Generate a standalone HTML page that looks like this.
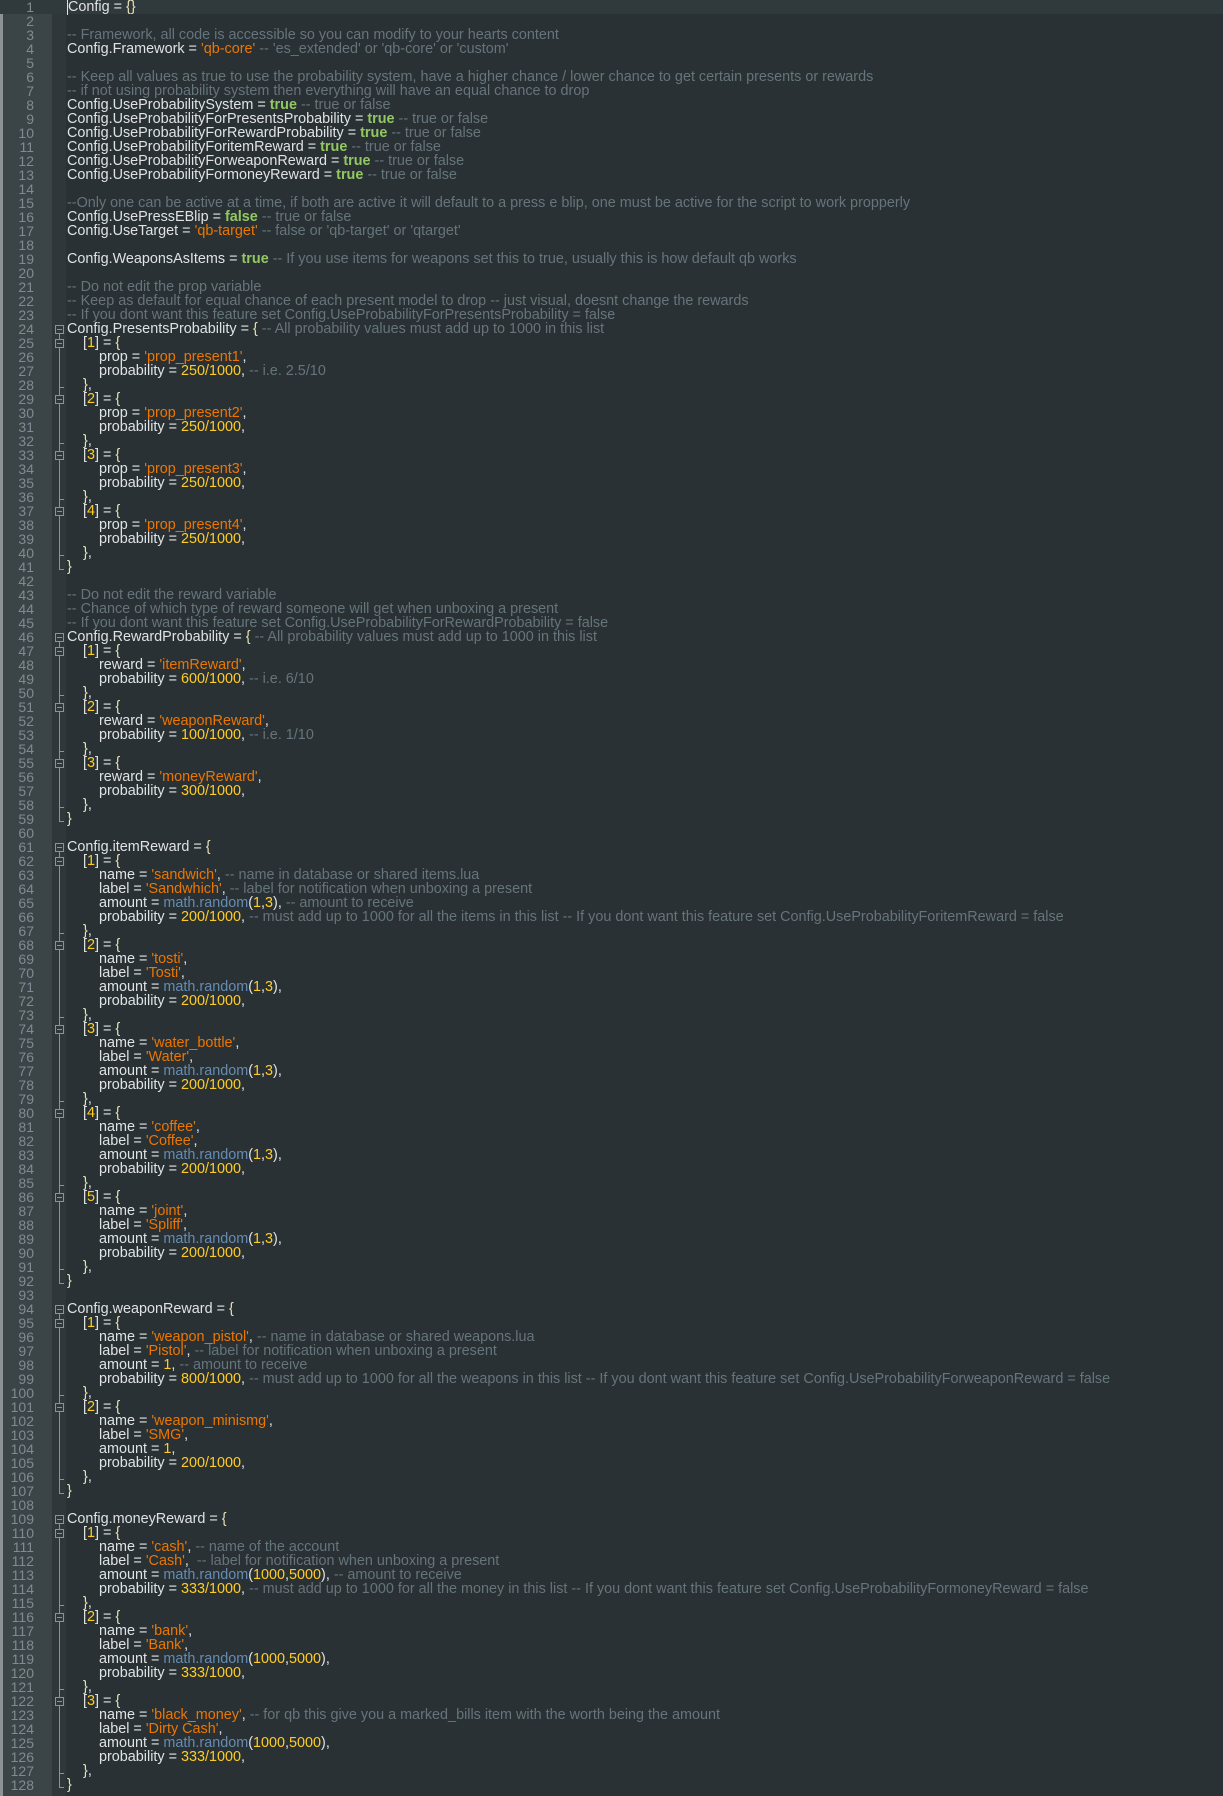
<!DOCTYPE html>
<html><head><meta charset="utf-8"><style>
html,body{margin:0;padding:0;width:1223px;height:1796px;overflow:hidden;background:#293134;}
body{position:relative;font-family:"Liberation Sans",sans-serif;font-size:14.4px;color:#e0e2e4;}
#gut{position:absolute;left:0;top:0;width:52px;height:1796px;background:#3b4447;border-left:3px solid #8c9295;box-sizing:border-box;}
#fold{position:absolute;left:52px;top:0;width:14px;height:1796px;background:#2f373a;}
.l{position:relative;height:14px;line-height:14px;white-space:pre;}
.l.cur{background:#30393c;}
.ln{position:absolute;left:0;width:34px;text-align:right;color:#7d8c93;font-size:14px;}
.fd{position:absolute;left:52px;width:14px;height:14px;}
.fv::before{content:"";position:absolute;left:7px;top:0;height:14px;border-left:1px solid #8a9498;}
.fb::after,.ft::after{content:"";position:absolute;left:3px;top:3px;width:7px;height:7px;border:1px solid #8a9498;background:#2f373a;box-sizing:content-box;}
.fb::before{content:"";position:absolute;left:7px;top:0;height:14px;border-left:1px solid #8a9498;}
.ft::before{content:"";position:absolute;left:7px;top:7px;height:7px;border-left:1px solid #8a9498;}
.fb>i,.ft>i{position:absolute;left:5px;top:7px;width:5px;height:1px;background:#8a9498;z-index:2;}
.fm::before{content:"";position:absolute;left:7px;top:0;height:14px;border-left:1px solid #8a9498;}
.fm::after{content:"";position:absolute;left:7px;top:9px;width:5px;border-top:1px solid #8a9498;}
.fe::before{content:"";position:absolute;left:7px;top:0;height:9px;border-left:1px solid #8a9498;}
.fe::after{content:"";position:absolute;left:7px;top:9px;width:5px;border-top:1px solid #8a9498;}
.cd{position:absolute;left:67px;}
.i1{left:83px;}.i2{left:99px;}
.c{color:#66747b}.s{color:#ec7600}.k{color:#93c763;font-weight:bold}.n{color:#ffcd22}.f{color:#678cb1}.b{color:#e8e2b7}
.caret{border-left:1px solid #e0e2e4;}
</style></head><body>
<div id="gut"></div><div id="fold"></div>
<div class="l cur"><span class="ln">1</span><span class="cd"><span class="caret">C</span>onfig = <span class="b">{}</span></span></div>
<div class="l"><span class="ln">2</span></div>
<div class="l"><span class="ln">3</span><span class="cd c">-- Framework, all code is accessible so you can modify to your hearts content</span></div>
<div class="l"><span class="ln">4</span><span class="cd">Config.Framework = <span class="s">'qb-core'</span> <span class="c">-- 'es_extended' or 'qb-core' or 'custom'</span></span></div>
<div class="l"><span class="ln">5</span></div>
<div class="l"><span class="ln">6</span><span class="cd c">-- Keep all values as true to use the probability system, have a higher chance / lower chance to get certain presents or rewards</span></div>
<div class="l"><span class="ln">7</span><span class="cd c">-- if not using probability system then everything will have an equal chance to drop</span></div>
<div class="l"><span class="ln">8</span><span class="cd">Config.UseProbabilitySystem = <span class="k">true</span> <span class="c">-- true or false</span></span></div>
<div class="l"><span class="ln">9</span><span class="cd">Config.UseProbabilityForPresentsProbability = <span class="k">true</span> <span class="c">-- true or false</span></span></div>
<div class="l"><span class="ln">10</span><span class="cd">Config.UseProbabilityForRewardProbability = <span class="k">true</span> <span class="c">-- true or false</span></span></div>
<div class="l"><span class="ln">11</span><span class="cd">Config.UseProbabilityForitemReward = <span class="k">true</span> <span class="c">-- true or false</span></span></div>
<div class="l"><span class="ln">12</span><span class="cd">Config.UseProbabilityForweaponReward = <span class="k">true</span> <span class="c">-- true or false</span></span></div>
<div class="l"><span class="ln">13</span><span class="cd">Config.UseProbabilityFormoneyReward = <span class="k">true</span> <span class="c">-- true or false</span></span></div>
<div class="l"><span class="ln">14</span></div>
<div class="l"><span class="ln">15</span><span class="cd c">--Only one can be active at a time, if both are active it will default to a press e blip, one must be active for the script to work propperly</span></div>
<div class="l"><span class="ln">16</span><span class="cd">Config.UsePressEBlip = <span class="k">false</span> <span class="c">-- true or false</span></span></div>
<div class="l"><span class="ln">17</span><span class="cd">Config.UseTarget = <span class="s">'qb-target'</span> <span class="c">-- false or 'qb-target' or 'qtarget'</span></span></div>
<div class="l"><span class="ln">18</span></div>
<div class="l"><span class="ln">19</span><span class="cd">Config.WeaponsAsItems = <span class="k">true</span> <span class="c">-- If you use items for weapons set this to true, usually this is how default qb works</span></span></div>
<div class="l"><span class="ln">20</span></div>
<div class="l"><span class="ln">21</span><span class="cd c">-- Do not edit the prop variable</span></div>
<div class="l"><span class="ln">22</span><span class="cd c">-- Keep as default for equal chance of each present model to drop -- just visual, doesnt change the rewards</span></div>
<div class="l"><span class="ln">23</span><span class="cd c">-- If you dont want this feature set Config.UseProbabilityForPresentsProbability = false</span></div>
<div class="l"><span class="ln">24</span><span class="fd ft"><i></i></span><span class="cd">Config.PresentsProbability = <span class="b">{</span> <span class="c">-- All probability values must add up to 1000 in this list</span></span></div>
<div class="l"><span class="ln">25</span><span class="fd fb"><i></i></span><span class="cd i1">[<span class="n">1</span>] = <span class="b">{</span></span></div>
<div class="l"><span class="ln">26</span><span class="fd fv"></span><span class="cd i2">prop = <span class="s">'prop_present1'</span>,</span></div>
<div class="l"><span class="ln">27</span><span class="fd fv"></span><span class="cd i2">probability = <span class="n">250/1000</span>, <span class="c">-- i.e. 2.5/10</span></span></div>
<div class="l"><span class="ln">28</span><span class="fd fm"></span><span class="cd i1"><span class="b">}</span>,</span></div>
<div class="l"><span class="ln">29</span><span class="fd fb"><i></i></span><span class="cd i1">[<span class="n">2</span>] = <span class="b">{</span></span></div>
<div class="l"><span class="ln">30</span><span class="fd fv"></span><span class="cd i2">prop = <span class="s">'prop_present2'</span>,</span></div>
<div class="l"><span class="ln">31</span><span class="fd fv"></span><span class="cd i2">probability = <span class="n">250/1000</span>,</span></div>
<div class="l"><span class="ln">32</span><span class="fd fm"></span><span class="cd i1"><span class="b">}</span>,</span></div>
<div class="l"><span class="ln">33</span><span class="fd fb"><i></i></span><span class="cd i1">[<span class="n">3</span>] = <span class="b">{</span></span></div>
<div class="l"><span class="ln">34</span><span class="fd fv"></span><span class="cd i2">prop = <span class="s">'prop_present3'</span>,</span></div>
<div class="l"><span class="ln">35</span><span class="fd fv"></span><span class="cd i2">probability = <span class="n">250/1000</span>,</span></div>
<div class="l"><span class="ln">36</span><span class="fd fm"></span><span class="cd i1"><span class="b">}</span>,</span></div>
<div class="l"><span class="ln">37</span><span class="fd fb"><i></i></span><span class="cd i1">[<span class="n">4</span>] = <span class="b">{</span></span></div>
<div class="l"><span class="ln">38</span><span class="fd fv"></span><span class="cd i2">prop = <span class="s">'prop_present4'</span>,</span></div>
<div class="l"><span class="ln">39</span><span class="fd fv"></span><span class="cd i2">probability = <span class="n">250/1000</span>,</span></div>
<div class="l"><span class="ln">40</span><span class="fd fm"></span><span class="cd i1"><span class="b">}</span>,</span></div>
<div class="l"><span class="ln">41</span><span class="fd fe"></span><span class="cd"><span class="b">}</span></span></div>
<div class="l"><span class="ln">42</span></div>
<div class="l"><span class="ln">43</span><span class="cd c">-- Do not edit the reward variable</span></div>
<div class="l"><span class="ln">44</span><span class="cd c">-- Chance of which type of reward someone will get when unboxing a present</span></div>
<div class="l"><span class="ln">45</span><span class="cd c">-- If you dont want this feature set Config.UseProbabilityForRewardProbability = false</span></div>
<div class="l"><span class="ln">46</span><span class="fd ft"><i></i></span><span class="cd">Config.RewardProbability = <span class="b">{</span> <span class="c">-- All probability values must add up to 1000 in this list</span></span></div>
<div class="l"><span class="ln">47</span><span class="fd fb"><i></i></span><span class="cd i1">[<span class="n">1</span>] = <span class="b">{</span></span></div>
<div class="l"><span class="ln">48</span><span class="fd fv"></span><span class="cd i2">reward = <span class="s">'itemReward'</span>,</span></div>
<div class="l"><span class="ln">49</span><span class="fd fv"></span><span class="cd i2">probability = <span class="n">600/1000</span>, <span class="c">-- i.e. 6/10</span></span></div>
<div class="l"><span class="ln">50</span><span class="fd fm"></span><span class="cd i1"><span class="b">}</span>,</span></div>
<div class="l"><span class="ln">51</span><span class="fd fb"><i></i></span><span class="cd i1">[<span class="n">2</span>] = <span class="b">{</span></span></div>
<div class="l"><span class="ln">52</span><span class="fd fv"></span><span class="cd i2">reward = <span class="s">'weaponReward'</span>,</span></div>
<div class="l"><span class="ln">53</span><span class="fd fv"></span><span class="cd i2">probability = <span class="n">100/1000</span>, <span class="c">-- i.e. 1/10</span></span></div>
<div class="l"><span class="ln">54</span><span class="fd fm"></span><span class="cd i1"><span class="b">}</span>,</span></div>
<div class="l"><span class="ln">55</span><span class="fd fb"><i></i></span><span class="cd i1">[<span class="n">3</span>] = <span class="b">{</span></span></div>
<div class="l"><span class="ln">56</span><span class="fd fv"></span><span class="cd i2">reward = <span class="s">'moneyReward'</span>,</span></div>
<div class="l"><span class="ln">57</span><span class="fd fv"></span><span class="cd i2">probability = <span class="n">300/1000</span>,</span></div>
<div class="l"><span class="ln">58</span><span class="fd fm"></span><span class="cd i1"><span class="b">}</span>,</span></div>
<div class="l"><span class="ln">59</span><span class="fd fe"></span><span class="cd"><span class="b">}</span></span></div>
<div class="l"><span class="ln">60</span></div>
<div class="l"><span class="ln">61</span><span class="fd ft"><i></i></span><span class="cd">Config.itemReward = <span class="b">{</span></span></div>
<div class="l"><span class="ln">62</span><span class="fd fb"><i></i></span><span class="cd i1">[<span class="n">1</span>] = <span class="b">{</span></span></div>
<div class="l"><span class="ln">63</span><span class="fd fv"></span><span class="cd i2">name = <span class="s">'sandwich'</span>, <span class="c">-- name in database or shared items.lua</span></span></div>
<div class="l"><span class="ln">64</span><span class="fd fv"></span><span class="cd i2">label = <span class="s">'Sandwhich'</span>, <span class="c">-- label for notification when unboxing a present</span></span></div>
<div class="l"><span class="ln">65</span><span class="fd fv"></span><span class="cd i2">amount = <span class="f">math.random</span>(<span class="n">1</span>,<span class="n">3</span>), <span class="c">-- amount to receive</span></span></div>
<div class="l"><span class="ln">66</span><span class="fd fv"></span><span class="cd i2">probability = <span class="n">200/1000</span>, <span class="c">-- must add up to 1000 for all the items in this list -- If you dont want this feature set Config.UseProbabilityForitemReward = false</span></span></div>
<div class="l"><span class="ln">67</span><span class="fd fm"></span><span class="cd i1"><span class="b">}</span>,</span></div>
<div class="l"><span class="ln">68</span><span class="fd fb"><i></i></span><span class="cd i1">[<span class="n">2</span>] = <span class="b">{</span></span></div>
<div class="l"><span class="ln">69</span><span class="fd fv"></span><span class="cd i2">name = <span class="s">'tosti'</span>,</span></div>
<div class="l"><span class="ln">70</span><span class="fd fv"></span><span class="cd i2">label = <span class="s">'Tosti'</span>,</span></div>
<div class="l"><span class="ln">71</span><span class="fd fv"></span><span class="cd i2">amount = <span class="f">math.random</span>(<span class="n">1</span>,<span class="n">3</span>),</span></div>
<div class="l"><span class="ln">72</span><span class="fd fv"></span><span class="cd i2">probability = <span class="n">200/1000</span>,</span></div>
<div class="l"><span class="ln">73</span><span class="fd fm"></span><span class="cd i1"><span class="b">}</span>,</span></div>
<div class="l"><span class="ln">74</span><span class="fd fb"><i></i></span><span class="cd i1">[<span class="n">3</span>] = <span class="b">{</span></span></div>
<div class="l"><span class="ln">75</span><span class="fd fv"></span><span class="cd i2">name = <span class="s">'water_bottle'</span>,</span></div>
<div class="l"><span class="ln">76</span><span class="fd fv"></span><span class="cd i2">label = <span class="s">'Water'</span>,</span></div>
<div class="l"><span class="ln">77</span><span class="fd fv"></span><span class="cd i2">amount = <span class="f">math.random</span>(<span class="n">1</span>,<span class="n">3</span>),</span></div>
<div class="l"><span class="ln">78</span><span class="fd fv"></span><span class="cd i2">probability = <span class="n">200/1000</span>,</span></div>
<div class="l"><span class="ln">79</span><span class="fd fm"></span><span class="cd i1"><span class="b">}</span>,</span></div>
<div class="l"><span class="ln">80</span><span class="fd fb"><i></i></span><span class="cd i1">[<span class="n">4</span>] = <span class="b">{</span></span></div>
<div class="l"><span class="ln">81</span><span class="fd fv"></span><span class="cd i2">name = <span class="s">'coffee'</span>,</span></div>
<div class="l"><span class="ln">82</span><span class="fd fv"></span><span class="cd i2">label = <span class="s">'Coffee'</span>,</span></div>
<div class="l"><span class="ln">83</span><span class="fd fv"></span><span class="cd i2">amount = <span class="f">math.random</span>(<span class="n">1</span>,<span class="n">3</span>),</span></div>
<div class="l"><span class="ln">84</span><span class="fd fv"></span><span class="cd i2">probability = <span class="n">200/1000</span>,</span></div>
<div class="l"><span class="ln">85</span><span class="fd fm"></span><span class="cd i1"><span class="b">}</span>,</span></div>
<div class="l"><span class="ln">86</span><span class="fd fb"><i></i></span><span class="cd i1">[<span class="n">5</span>] = <span class="b">{</span></span></div>
<div class="l"><span class="ln">87</span><span class="fd fv"></span><span class="cd i2">name = <span class="s">'joint'</span>,</span></div>
<div class="l"><span class="ln">88</span><span class="fd fv"></span><span class="cd i2">label = <span class="s">'Spliff'</span>,</span></div>
<div class="l"><span class="ln">89</span><span class="fd fv"></span><span class="cd i2">amount = <span class="f">math.random</span>(<span class="n">1</span>,<span class="n">3</span>),</span></div>
<div class="l"><span class="ln">90</span><span class="fd fv"></span><span class="cd i2">probability = <span class="n">200/1000</span>,</span></div>
<div class="l"><span class="ln">91</span><span class="fd fm"></span><span class="cd i1"><span class="b">}</span>,</span></div>
<div class="l"><span class="ln">92</span><span class="fd fe"></span><span class="cd"><span class="b">}</span></span></div>
<div class="l"><span class="ln">93</span></div>
<div class="l"><span class="ln">94</span><span class="fd ft"><i></i></span><span class="cd">Config.weaponReward = <span class="b">{</span></span></div>
<div class="l"><span class="ln">95</span><span class="fd fb"><i></i></span><span class="cd i1">[<span class="n">1</span>] = <span class="b">{</span></span></div>
<div class="l"><span class="ln">96</span><span class="fd fv"></span><span class="cd i2">name = <span class="s">'weapon_pistol'</span>, <span class="c">-- name in database or shared weapons.lua</span></span></div>
<div class="l"><span class="ln">97</span><span class="fd fv"></span><span class="cd i2">label = <span class="s">'Pistol'</span>, <span class="c">-- label for notification when unboxing a present</span></span></div>
<div class="l"><span class="ln">98</span><span class="fd fv"></span><span class="cd i2">amount = <span class="n">1</span>, <span class="c">-- amount to receive</span></span></div>
<div class="l"><span class="ln">99</span><span class="fd fv"></span><span class="cd i2">probability = <span class="n">800/1000</span>, <span class="c">-- must add up to 1000 for all the weapons in this list -- If you dont want this feature set Config.UseProbabilityForweaponReward = false</span></span></div>
<div class="l"><span class="ln">100</span><span class="fd fm"></span><span class="cd i1"><span class="b">}</span>,</span></div>
<div class="l"><span class="ln">101</span><span class="fd fb"><i></i></span><span class="cd i1">[<span class="n">2</span>] = <span class="b">{</span></span></div>
<div class="l"><span class="ln">102</span><span class="fd fv"></span><span class="cd i2">name = <span class="s">'weapon_minismg'</span>,</span></div>
<div class="l"><span class="ln">103</span><span class="fd fv"></span><span class="cd i2">label = <span class="s">'SMG'</span>,</span></div>
<div class="l"><span class="ln">104</span><span class="fd fv"></span><span class="cd i2">amount = <span class="n">1</span>,</span></div>
<div class="l"><span class="ln">105</span><span class="fd fv"></span><span class="cd i2">probability = <span class="n">200/1000</span>,</span></div>
<div class="l"><span class="ln">106</span><span class="fd fm"></span><span class="cd i1"><span class="b">}</span>,</span></div>
<div class="l"><span class="ln">107</span><span class="fd fe"></span><span class="cd"><span class="b">}</span></span></div>
<div class="l"><span class="ln">108</span></div>
<div class="l"><span class="ln">109</span><span class="fd ft"><i></i></span><span class="cd">Config.moneyReward = <span class="b">{</span></span></div>
<div class="l"><span class="ln">110</span><span class="fd fb"><i></i></span><span class="cd i1">[<span class="n">1</span>] = <span class="b">{</span></span></div>
<div class="l"><span class="ln">111</span><span class="fd fv"></span><span class="cd i2">name = <span class="s">'cash'</span>, <span class="c">-- name of the account</span></span></div>
<div class="l"><span class="ln">112</span><span class="fd fv"></span><span class="cd i2">label = <span class="s">'Cash'</span>,  <span class="c">-- label for notification when unboxing a present</span></span></div>
<div class="l"><span class="ln">113</span><span class="fd fv"></span><span class="cd i2">amount = <span class="f">math.random</span>(<span class="n">1000</span>,<span class="n">5000</span>), <span class="c">-- amount to receive</span></span></div>
<div class="l"><span class="ln">114</span><span class="fd fv"></span><span class="cd i2">probability = <span class="n">333/1000</span>, <span class="c">-- must add up to 1000 for all the money in this list -- If you dont want this feature set Config.UseProbabilityFormoneyReward = false</span></span></div>
<div class="l"><span class="ln">115</span><span class="fd fm"></span><span class="cd i1"><span class="b">}</span>,</span></div>
<div class="l"><span class="ln">116</span><span class="fd fb"><i></i></span><span class="cd i1">[<span class="n">2</span>] = <span class="b">{</span></span></div>
<div class="l"><span class="ln">117</span><span class="fd fv"></span><span class="cd i2">name = <span class="s">'bank'</span>,</span></div>
<div class="l"><span class="ln">118</span><span class="fd fv"></span><span class="cd i2">label = <span class="s">'Bank'</span>,</span></div>
<div class="l"><span class="ln">119</span><span class="fd fv"></span><span class="cd i2">amount = <span class="f">math.random</span>(<span class="n">1000</span>,<span class="n">5000</span>),</span></div>
<div class="l"><span class="ln">120</span><span class="fd fv"></span><span class="cd i2">probability = <span class="n">333/1000</span>,</span></div>
<div class="l"><span class="ln">121</span><span class="fd fm"></span><span class="cd i1"><span class="b">}</span>,</span></div>
<div class="l"><span class="ln">122</span><span class="fd fb"><i></i></span><span class="cd i1">[<span class="n">3</span>] = <span class="b">{</span></span></div>
<div class="l"><span class="ln">123</span><span class="fd fv"></span><span class="cd i2">name = <span class="s">'black_money'</span>, <span class="c">-- for qb this give you a marked_bills item with the worth being the amount</span></span></div>
<div class="l"><span class="ln">124</span><span class="fd fv"></span><span class="cd i2">label = <span class="s">'Dirty Cash'</span>,</span></div>
<div class="l"><span class="ln">125</span><span class="fd fv"></span><span class="cd i2">amount = <span class="f">math.random</span>(<span class="n">1000</span>,<span class="n">5000</span>),</span></div>
<div class="l"><span class="ln">126</span><span class="fd fv"></span><span class="cd i2">probability = <span class="n">333/1000</span>,</span></div>
<div class="l"><span class="ln">127</span><span class="fd fm"></span><span class="cd i1"><span class="b">}</span>,</span></div>
<div class="l"><span class="ln">128</span><span class="fd fe"></span><span class="cd"><span class="b">}</span></span></div>
</body></html>
